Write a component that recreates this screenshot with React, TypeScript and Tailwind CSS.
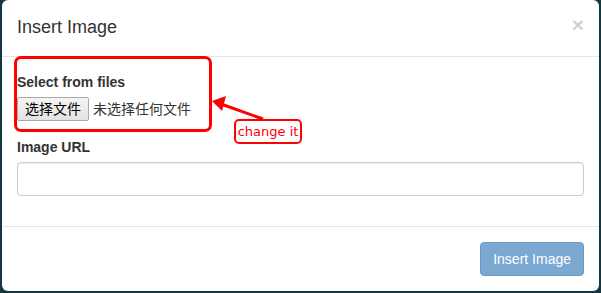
import React from "react";

const sans = "font-['Helvetica_Neue','Liberation_Sans',Arial,'Noto_Sans_CJK_SC',sans-serif]";
const cjk = "font-['Microsoft_YaHei','Noto_Sans_CJK_SC','Liberation_Sans',sans-serif]";

function Annotation() {
  return (
    <>
      <div className="absolute left-[12px] top-[56px] w-[198px] h-[76px] border-[3px] border-[#ff0000] rounded-[7px] pointer-events-none" />
      <svg className="absolute left-[205px] top-[92px] pointer-events-none" width="64" height="34" viewBox="0 0 64 34">
        <line x1="56" y1="27" x2="14" y2="12" stroke="#ff0000" strokeWidth="3" />
        <polygon points="5,9 19,4 15,19" fill="#ff0000" />
      </svg>
      <div className="absolute left-[232px] top-[119px] w-[68px] h-[25px] border-2 border-[#ff0000] rounded-[5px] bg-white flex items-center justify-center font-['DejaVu_Sans',Verdana,sans-serif] text-[13px] text-[#ff0000] leading-none pb-[1px]">
        change it
      </div>
    </>
  );
}

export default function App() {
  return (
    <div className={`w-[601px] h-[293px] bg-[#153740] pl-[2px] pr-[2px] pb-[2px] ${sans} text-[14px] text-[#333]`}>
      <div className="relative h-[291px] bg-white rounded-[6px] flex flex-col">
        <div className="flex items-start justify-between px-[15px] pt-[15px] pb-[15px] border-b border-[#e5e5e5]">
          <h4 className="text-[18px] leading-[25.7px]">Insert Image</h4>
          <span className="text-[21px] font-bold leading-none text-black/20 -mt-[1px]">×</span>
        </div>
        <div className="p-[15px]">
          <div className="mb-[16px]">
            <label className="block font-bold leading-[20px] mb-[5px]">Select from files</label>
            <div className="flex items-center h-[24px]">
              <span className={`${cjk} h-[24px] w-[72px] flex items-center justify-center border border-[#a9a9a9] rounded-[2px] bg-gradient-to-b from-[#f4f4f4] to-[#e3e3e3] text-[14px] text-black`}>
                选择文件
              </span>
              <span className={`${cjk} ml-[4px] text-[14px] text-[#333]`}>未选择任何文件</span>
            </div>
          </div>
          <div className="mb-[15px]">
            <label className="block font-bold leading-[20px] mb-[5px]">Image URL</label>
            <div className="h-[34px] border border-[#ccc] rounded-[4px] shadow-[inset_0_1px_1px_rgba(0,0,0,0.075)]" />
          </div>
        </div>
        <div className="flex justify-end p-[15px] border-t border-[#e5e5e5]">
          <button className="h-[34px] px-[12px] rounded-[4px] bg-[#7aa8d0] border border-[#6d9bc4] text-white text-[14px] leading-[20px]">
            Insert Image
          </button>
        </div>
        <Annotation />
      </div>
    </div>
  );
}
